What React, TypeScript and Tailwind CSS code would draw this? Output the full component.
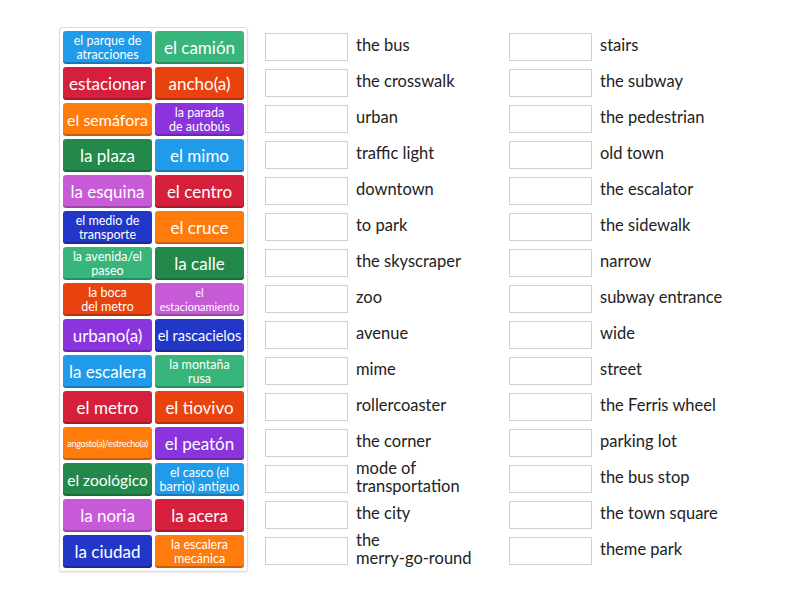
import React from "react";

type Tile = { text: string; color: string; size: string };

const C = {
  sky: "bg-[#1f9bea]",
  teal: "bg-[#37b57b]",
  red: "bg-[#d61f3b]",
  flame: "bg-[#e8420e]",
  orange: "bg-[#ff7b0b]",
  purple: "bg-[#8b34dd]",
  green: "bg-[#22894a]",
  pink: "bg-[#c75ad6]",
  navy: "bg-[#2237c8]",
};

const big = "text-[17px] leading-[19px]";
const two = "text-[12.5px] leading-[14px]";

const tiles: Tile[] = [
  { text: "el parque de\natracciones", color: C.sky, size: two },
  { text: "el camión", color: C.teal, size: big },
  { text: "estacionar", color: C.red, size: big },
  { text: "ancho(a)", color: C.flame, size: big },
  { text: "el semáfora", color: C.orange, size: "text-[16px] leading-[18px]" },
  { text: "la parada\nde autobús", color: C.purple, size: two },
  { text: "la plaza", color: C.green, size: big },
  { text: "el mimo", color: C.sky, size: big },
  { text: "la esquina", color: C.pink, size: big },
  { text: "el centro", color: C.red, size: big },
  { text: "el medio de\ntransporte", color: C.navy, size: two },
  { text: "el cruce", color: C.orange, size: big },
  { text: "la avenida/el\npaseo", color: C.teal, size: two },
  { text: "la calle", color: C.green, size: big },
  { text: "la boca\ndel metro", color: C.flame, size: two },
  { text: "el\nestacionamiento", color: C.pink, size: "text-[11px] leading-[14px]" },
  { text: "urbano(a)", color: C.purple, size: big },
  { text: "el rascacielos", color: C.navy, size: "text-[14.5px] leading-[16px]" },
  { text: "la escalera", color: C.sky, size: big },
  { text: "la montaña\nrusa", color: C.teal, size: two },
  { text: "el metro", color: C.red, size: big },
  { text: "el tiovivo", color: C.flame, size: big },
  { text: "angosto(a)/estrecho(a)", color: C.orange, size: "text-[9px] leading-[12px] tracking-[-0.3px]" },
  { text: "el peatón", color: C.purple, size: big },
  { text: "el zoológico", color: C.green, size: "text-[15.5px] leading-[18px]" },
  { text: "el casco (el\nbarrio) antiguo", color: C.sky, size: two },
  { text: "la noria", color: C.pink, size: big },
  { text: "la acera", color: C.red, size: big },
  { text: "la ciudad", color: C.navy, size: big },
  { text: "la escalera\nmecánica", color: C.orange, size: two },
];

const colA = [
  "the bus",
  "the crosswalk",
  "urban",
  "traffic light",
  "downtown",
  "to park",
  "the skyscraper",
  "zoo",
  "avenue",
  "mime",
  "rollercoaster",
  "the corner",
  "mode of\ntransportation",
  "the city",
  "the\nmerry-go-round",
];

const colB = [
  "stairs",
  "the subway",
  "the pedestrian",
  "old town",
  "the escalator",
  "the sidewalk",
  "narrow",
  "subway entrance",
  "wide",
  "street",
  "the Ferris wheel",
  "parking lot",
  "the bus stop",
  "the town square",
  "theme park",
];

function AnswerColumn({ items }: { items: string[] }) {
  return (
    <div className="flex w-[244px] flex-col gap-[3px]">
      {items.map((label) => (
        <div key={label} className="flex h-[33px] items-center">
          <div className="h-[28px] w-[83px] shrink-0 border border-[#cfcfcf] bg-white" />
          <div className="mb-[3px] ml-[8px] whitespace-pre text-[16.5px] leading-[18px] text-[#222]">
            {label}
          </div>
        </div>
      ))}
    </div>
  );
}

export default function App() {
  return (
    <div
      className="h-[600px] w-[800px] bg-white pl-[59px] pt-[27px]"
      style={{ fontFamily: "Lato, 'Open Sans', sans-serif" }}
    >
      <div className="flex">
        <div className="grid grid-cols-[89px_89px] gap-[3px] rounded-[3px] border border-[#dcdcdc] p-[3px] shadow-[0_1px_2px_rgba(0,0,0,0.08)]">
          {tiles.map((t) => (
            <div
              key={t.text}
              className={`flex h-[33px] items-center justify-center whitespace-pre rounded-[3px] text-center text-white shadow-[inset_0_-2px_0_rgba(0,0,0,0.22)] ${t.color} ${t.size}`}
            >
              {t.text}
            </div>
          ))}
        </div>
        <div className="ml-[17px] flex pt-[3px]">
          <AnswerColumn items={colA} />
          <AnswerColumn items={colB} />
        </div>
      </div>
    </div>
  );
}
